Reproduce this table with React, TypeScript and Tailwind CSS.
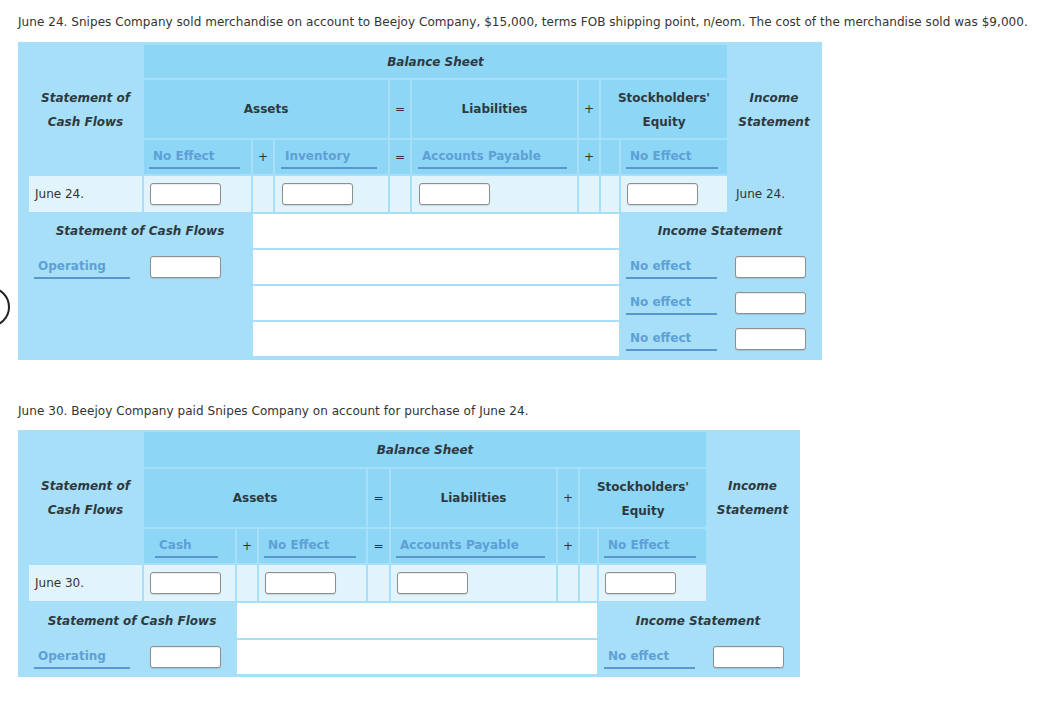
import React from "react";

const Box = ({ className = "" }: { className?: string }) => (
  <div
    className={`h-[22px] w-[71px] rounded-[3px] border border-[#8f8f8f] bg-white shadow-[inset_0_1px_1px_rgba(0,0,0,0.08),0_1px_1px_rgba(0,0,0,0.12)] ${className}`}
  />
);

const Sel = ({ label, w, className = "" }: { label: string; w: string; className?: string }) => (
  <div
    className={`${w} border-b-2 border-[#5b97cf] pl-[4px] text-[12px] font-bold leading-[22px] text-[#5d9fd6] ${className}`}
  >
    {label}
  </div>
);

const hdr = "bg-[#8ed6f6] flex items-center justify-center";
const row = "bg-[#e1f4fc] flex items-center";
const ital = "italic font-bold text-[#2d3940]";
const bold = "font-bold text-[#2d3940]";

function Table1() {
  return (
    <div className="grid w-fit grid-cols-[113px_107px_20px_113px_20px_165px_20px_18px_106px_93px] grid-rows-[33px_58px_34px_36px_34px_34px_34px_34px] gap-[2px] bg-[#a8dff8] pb-[4px] pl-[11px] pt-[3px] text-[12px] text-[#333]">
      <div className={`col-start-1 row-span-3 row-start-1 flex items-center justify-center text-center leading-[24px] ${ital}`}>
        Statement of
        <br />
        Cash Flows
      </div>
      <div className={`col-span-8 col-start-2 row-start-1 ${hdr} ${ital}`}>Balance Sheet</div>
      <div className={`col-start-10 row-span-3 row-start-1 flex items-center justify-center pr-[3px] text-center leading-[24px] ${ital}`}>
        Income
        <br />
        Statement
      </div>

      <div className={`col-span-3 col-start-2 row-start-2 ${hdr} ${bold}`}>Assets</div>
      <div className={`col-start-5 row-start-2 ${hdr}`}>=</div>
      <div className={`col-start-6 row-start-2 ${hdr} ${bold}`}>Liabilities</div>
      <div className={`col-start-7 row-start-2 ${hdr}`}>+</div>
      <div className={`col-span-2 col-start-8 row-start-2 pt-[2px] text-center leading-[24px] ${hdr} ${bold}`}>
        Stockholders&apos;
        <br />
        Equity
      </div>

      <div className={`col-start-2 row-start-3 bg-[#8ed6f6] flex items-center pl-[5px]`}>
        <Sel label="No Effect" w="w-[91px]" />
      </div>
      <div className={`col-start-3 row-start-3 ${hdr}`}>+</div>
      <div className={`col-start-4 row-start-3 bg-[#8ed6f6] flex items-center pl-[6px]`}>
        <Sel label="Inventory" w="w-[96px]" />
      </div>
      <div className={`col-start-5 row-start-3 ${hdr}`}>=</div>
      <div className={`col-start-6 row-start-3 bg-[#8ed6f6] flex items-center pl-[6px]`}>
        <Sel label="Accounts Payable" w="w-[149px]" />
      </div>
      <div className={`col-start-7 row-start-3 ${hdr}`}>+</div>
      <div className={`col-start-8 row-start-3 ${hdr}`} />
      <div className={`col-start-9 row-start-3 bg-[#8ed6f6] flex items-center pl-[5px]`}>
        <Sel label="No Effect" w="w-[92px]" />
      </div>

      <div className={`col-start-1 row-start-4 ${row} pl-[6px]`}>June 24.</div>
      <div className={`col-start-2 row-start-4 ${row} pl-[6px]`}>
        <Box />
      </div>
      <div className={`col-start-3 row-start-4 ${row}`} />
      <div className={`col-start-4 row-start-4 ${row} pl-[7px]`}>
        <Box />
      </div>
      <div className={`col-start-5 row-start-4 ${row}`} />
      <div className={`col-start-6 row-start-4 ${row} pl-[7px]`}>
        <Box />
      </div>
      <div className={`col-start-7 row-start-4 ${row}`} />
      <div className={`col-start-8 row-start-4 ${row}`} />
      <div className={`col-start-9 row-start-4 ${row} pl-[6px]`}>
        <Box />
      </div>
      <div className="col-start-10 row-start-4 flex items-center pl-[7px]">June 24.</div>

      <div className={`col-span-2 col-start-1 row-start-5 flex items-center justify-center ${ital}`}>
        Statement of Cash Flows
      </div>
      <div className="col-span-2 col-start-1 row-start-6 flex items-center pl-[5px]">
        <Sel label="Operating" w="w-[96px]" />
        <Box className="ml-[20px]" />
      </div>
      <div className="col-span-6 col-start-3 row-start-5 bg-white" />
      <div className="col-span-6 col-start-3 row-start-6 bg-white" />
      <div className="col-span-6 col-start-3 row-start-7 bg-white" />
      <div className="col-span-6 col-start-3 row-start-8 bg-white" />
      <div className={`col-span-2 col-start-9 row-start-5 flex items-center justify-center pr-[3px] ${ital}`}>
        Income Statement
      </div>
      <div className="col-span-2 col-start-9 row-start-6 flex items-center pl-[5px]">
        <Sel label="No effect" w="w-[91px]" />
        <Box className="ml-[18px]" />
      </div>
      <div className="col-span-2 col-start-9 row-start-7 flex items-center pl-[5px]">
        <Sel label="No effect" w="w-[91px]" />
        <Box className="ml-[18px]" />
      </div>
      <div className="col-span-2 col-start-9 row-start-8 flex items-center pl-[5px]">
        <Sel label="No effect" w="w-[91px]" />
        <Box className="ml-[18px]" />
      </div>
    </div>
  );
}

function Table2() {
  return (
    <div className="grid w-fit grid-cols-[113px_91px_20px_107px_21px_165px_20px_17px_107px_92px] grid-rows-[35px_58px_34px_36px_35px_34px] gap-[2px] bg-[#a8dff8] pb-[3px] pl-[11px] pt-[2px] text-[12px] text-[#333]">
      <div className={`col-start-1 row-span-3 row-start-1 flex items-center justify-center text-center leading-[24px] ${ital}`}>
        Statement of
        <br />
        Cash Flows
      </div>
      <div className={`col-span-8 col-start-2 row-start-1 ${hdr} ${ital}`}>Balance Sheet</div>
      <div className={`col-start-10 row-span-3 row-start-1 flex items-center justify-center pr-[3px] text-center leading-[24px] ${ital}`}>
        Income
        <br />
        Statement
      </div>

      <div className={`col-span-3 col-start-2 row-start-2 ${hdr} ${bold}`}>Assets</div>
      <div className={`col-start-5 row-start-2 ${hdr}`}>=</div>
      <div className={`col-start-6 row-start-2 ${hdr} ${bold}`}>Liabilities</div>
      <div className={`col-start-7 row-start-2 ${hdr}`}>+</div>
      <div className={`col-span-2 col-start-8 row-start-2 pt-[2px] text-center leading-[24px] ${hdr} ${bold}`}>
        Stockholders&apos;
        <br />
        Equity
      </div>

      <div className={`col-start-2 row-start-3 bg-[#8ed6f6] flex items-center pl-[11px]`}>
        <Sel label="Cash" w="w-[63px]" />
      </div>
      <div className={`col-start-3 row-start-3 ${hdr}`}>+</div>
      <div className={`col-start-4 row-start-3 bg-[#8ed6f6] flex items-center pl-[5px]`}>
        <Sel label="No Effect" w="w-[92px]" />
      </div>
      <div className={`col-start-5 row-start-3 ${hdr}`}>=</div>
      <div className={`col-start-6 row-start-3 bg-[#8ed6f6] flex items-center pl-[5px]`}>
        <Sel label="Accounts Payable" w="w-[149px]" />
      </div>
      <div className={`col-start-7 row-start-3 ${hdr}`}>+</div>
      <div className={`col-start-8 row-start-3 ${hdr}`} />
      <div className={`col-start-9 row-start-3 bg-[#8ed6f6] flex items-center pl-[5px]`}>
        <Sel label="No Effect" w="w-[92px]" />
      </div>

      <div className={`col-start-1 row-start-4 ${row} pl-[6px]`}>June 30.</div>
      <div className={`col-start-2 row-start-4 ${row} pl-[6px]`}>
        <Box />
      </div>
      <div className={`col-start-3 row-start-4 ${row}`} />
      <div className={`col-start-4 row-start-4 ${row} pl-[6px]`}>
        <Box />
      </div>
      <div className={`col-start-5 row-start-4 ${row}`} />
      <div className={`col-start-6 row-start-4 ${row} pl-[6px]`}>
        <Box />
      </div>
      <div className={`col-start-7 row-start-4 ${row}`} />
      <div className={`col-start-8 row-start-4 ${row}`} />
      <div className={`col-start-9 row-start-4 ${row} pl-[6px]`}>
        <Box />
      </div>

      <div className={`col-span-2 col-start-1 row-start-5 flex items-center justify-center ${ital}`}>
        Statement of Cash Flows
      </div>
      <div className="col-span-2 col-start-1 row-start-6 flex items-center pl-[5px]">
        <Sel label="Operating" w="w-[96px]" />
        <Box className="ml-[20px]" />
      </div>
      <div className="col-span-6 col-start-3 row-start-5 bg-white" />
      <div className="col-span-6 col-start-3 row-start-6 bg-white" />
      <div className={`col-span-2 col-start-9 row-start-5 flex items-center justify-center pr-[3px] ${ital}`}>
        Income Statement
      </div>
      <div className="col-span-2 col-start-9 row-start-6 flex items-center pl-[5px]">
        <Sel label="No effect" w="w-[91px]" />
        <Box className="ml-[18px]" />
      </div>
    </div>
  );
}

export default function App() {
  return (
    <div className="relative min-h-[702px] w-[1051px] bg-white pl-[18px] pt-[12px] font-['Verdana','DejaVu_Sans',sans-serif] text-[12px] text-[#333]">
      <p className="leading-[20px] tracking-[0.05px]">
        June 24. Snipes Company sold merchandise on account to Beejoy Company, $15,000, terms FOB shipping point,
        n/eom. The cost of the merchandise sold was $9,000.
      </p>
      <div className="mt-[10px]">
        <Table1 />
      </div>
      <p className="mt-[41px] leading-[20px] tracking-[0.05px]">
        June 30. Beejoy Company paid Snipes Company on account for purchase of June 24.
      </p>
      <div className="mt-[9px]">
        <Table2 />
      </div>
      <div className="absolute left-[-30px] top-[287px] h-[40px] w-[40px] rounded-full border-2 border-[#222]" />
    </div>
  );
}
